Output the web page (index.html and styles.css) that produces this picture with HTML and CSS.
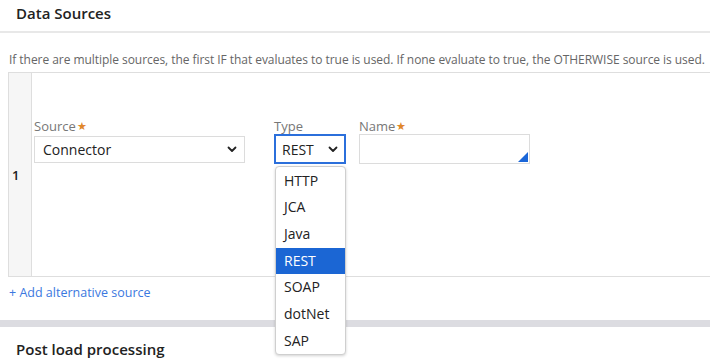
FILE: index.html
```html
<!DOCTYPE html>
<html>
<head>
<meta charset="utf-8">
<link rel="stylesheet" href="styles.css">
</head>
<body>
<div class="header">Data Sources</div>
<div class="desc">If there are multiple sources, the first IF that evaluates to true is used. If none evaluate to true, the OTHERWISE source is used.</div>
<div class="table">
  <div class="numcol">1</div>
  <div class="content">
    <div class="field source">
      <div class="label">Source<span class="req">★</span></div>
      <div class="select">Connector<svg class="chev" width="10" height="7" viewBox="0 0 10 7"><polyline points="1.5,1.5 5,5 8.5,1.5" fill="none" stroke="#222" stroke-width="1.8" stroke-linecap="round" stroke-linejoin="round"/></svg></div>
    </div>
    <div class="field type">
      <div class="label">Type</div>
      <div class="select focused">REST<svg class="chev" width="10" height="7" viewBox="0 0 10 7"><polyline points="1.5,1.5 5,5 8.5,1.5" fill="none" stroke="#222" stroke-width="1.8" stroke-linecap="round" stroke-linejoin="round"/></svg></div>
      <ul class="menu">
        <li>HTTP</li>
        <li>JCA</li>
        <li>Java</li>
        <li class="active">REST</li>
        <li>SOAP</li>
        <li>dotNet</li>
        <li>SAP</li>
      </ul>
    </div>
    <div class="field name">
      <div class="label">Name<span class="req">★</span></div>
      <div class="input"><span class="corner"></span></div>
    </div>
  </div>
</div>
<div class="add">+ Add alternative source</div>
<div class="band"></div>
<div class="header2">Post load processing</div>
</body>
</html>
```
FILE: styles.css
```css
html, body {
  margin: 0;
  padding: 0;
  background: #fff;
  font-family: "Open Sans", "Liberation Sans", sans-serif;
  color: #222;
  overflow: hidden;
}
.header {
  height: 31px;
  line-height: 26px;
  padding-left: 16px;
  font-size: 15px;
  font-weight: 600;
  color: #222;
  border-bottom: 2px solid #e8e8e8;
}
.desc {
  margin-top: 18px;
  padding-left: 9px;
  font-size: 12px;
  line-height: 17px;
  color: #666;
  white-space: nowrap;
  letter-spacing: -0.05px;
}
.table {
  margin-top: 4px;
  margin-left: 8px;
  height: 203px;
  display: flex;
  border: 1px solid #dedede;
  border-right: none;
}
.numcol {
  width: 23px;
  background: #f6f6f6;
  border-right: 1px solid #dedede;
  display: flex;
  align-items: center;
  padding-left: 3px;
  box-sizing: border-box;
  font-size: 13px;
  font-weight: 600;
  color: #222;
}
.content {
  flex: 1;
  display: flex;
  padding-left: 2px;
  padding-top: 44px;
  align-items: flex-start;
}
.field {
  display: flex;
  flex-direction: column;
  position: relative;
}
.label {
  font-size: 13px;
  line-height: 18px;
  color: #777;
  height: 18px;
}
.req {
  color: #e0872a;
  font-size: 11px;
  margin-left: 1px;
  position: relative;
  top: -1px;
}
.select {
  display: flex;
  align-items: center;
  justify-content: space-between;
  box-sizing: border-box;
  border: 1px solid #dcdcdc;
  font-size: 14px;
  color: #222;
}
.source .select {
  width: 211px;
  height: 27px;
  margin-top: 1px;
  padding: 0 7px 0 8px;
}
.type {
  margin-left: 29px;
}
.type .select.focused {
  width: 72px;
  height: 30px;
  margin-top: -1px;
  border: 2px solid #2b6fdb;
  padding: 0 6px 0 6px;
}
.name {
  margin-left: 13px;
}
.input {
  position: relative;
  width: 171px;
  height: 30px;
  margin-top: -1px;
  box-sizing: border-box;
  border: 1px solid #dcdcdc;
}
.corner {
  position: absolute;
  right: 1px;
  bottom: 1px;
  width: 0;
  height: 0;
  border-left: 10px solid transparent;
  border-bottom: 10px solid #1a66d8;
}
.menu {
  position: absolute;
  left: 1px;
  top: 49px;
  width: 71px;
  margin: 0;
  padding: 0;
  list-style: none;
  background: #fff;
  border: 1px solid #cfcfcf;
  border-radius: 4px;
  box-shadow: 0 1px 3px rgba(0,0,0,0.18);
  box-sizing: border-box;
  height: 189px;
  padding-top: 0.5px;
  z-index: 5;
}
.menu li {
  height: 26.7px;
  line-height: 26.7px;
  padding-left: 8px;
  font-size: 14px;
  color: #222;
}
.menu li.active {
  background: #1b66d4;
  color: #fff;
}
.add {
  margin-top: 7px;
  padding-left: 9px;
  font-size: 12.5px;
  line-height: 17px;
  color: #3b78e0;
}
.band {
  margin-top: 19px;
  height: 7px;
  background: #dcdce1;
}
.header2 {
  margin-top: 11px;
  padding-left: 16px;
  font-size: 15px;
  font-weight: 600;
  line-height: 22px;
  color: #222;
}
```
